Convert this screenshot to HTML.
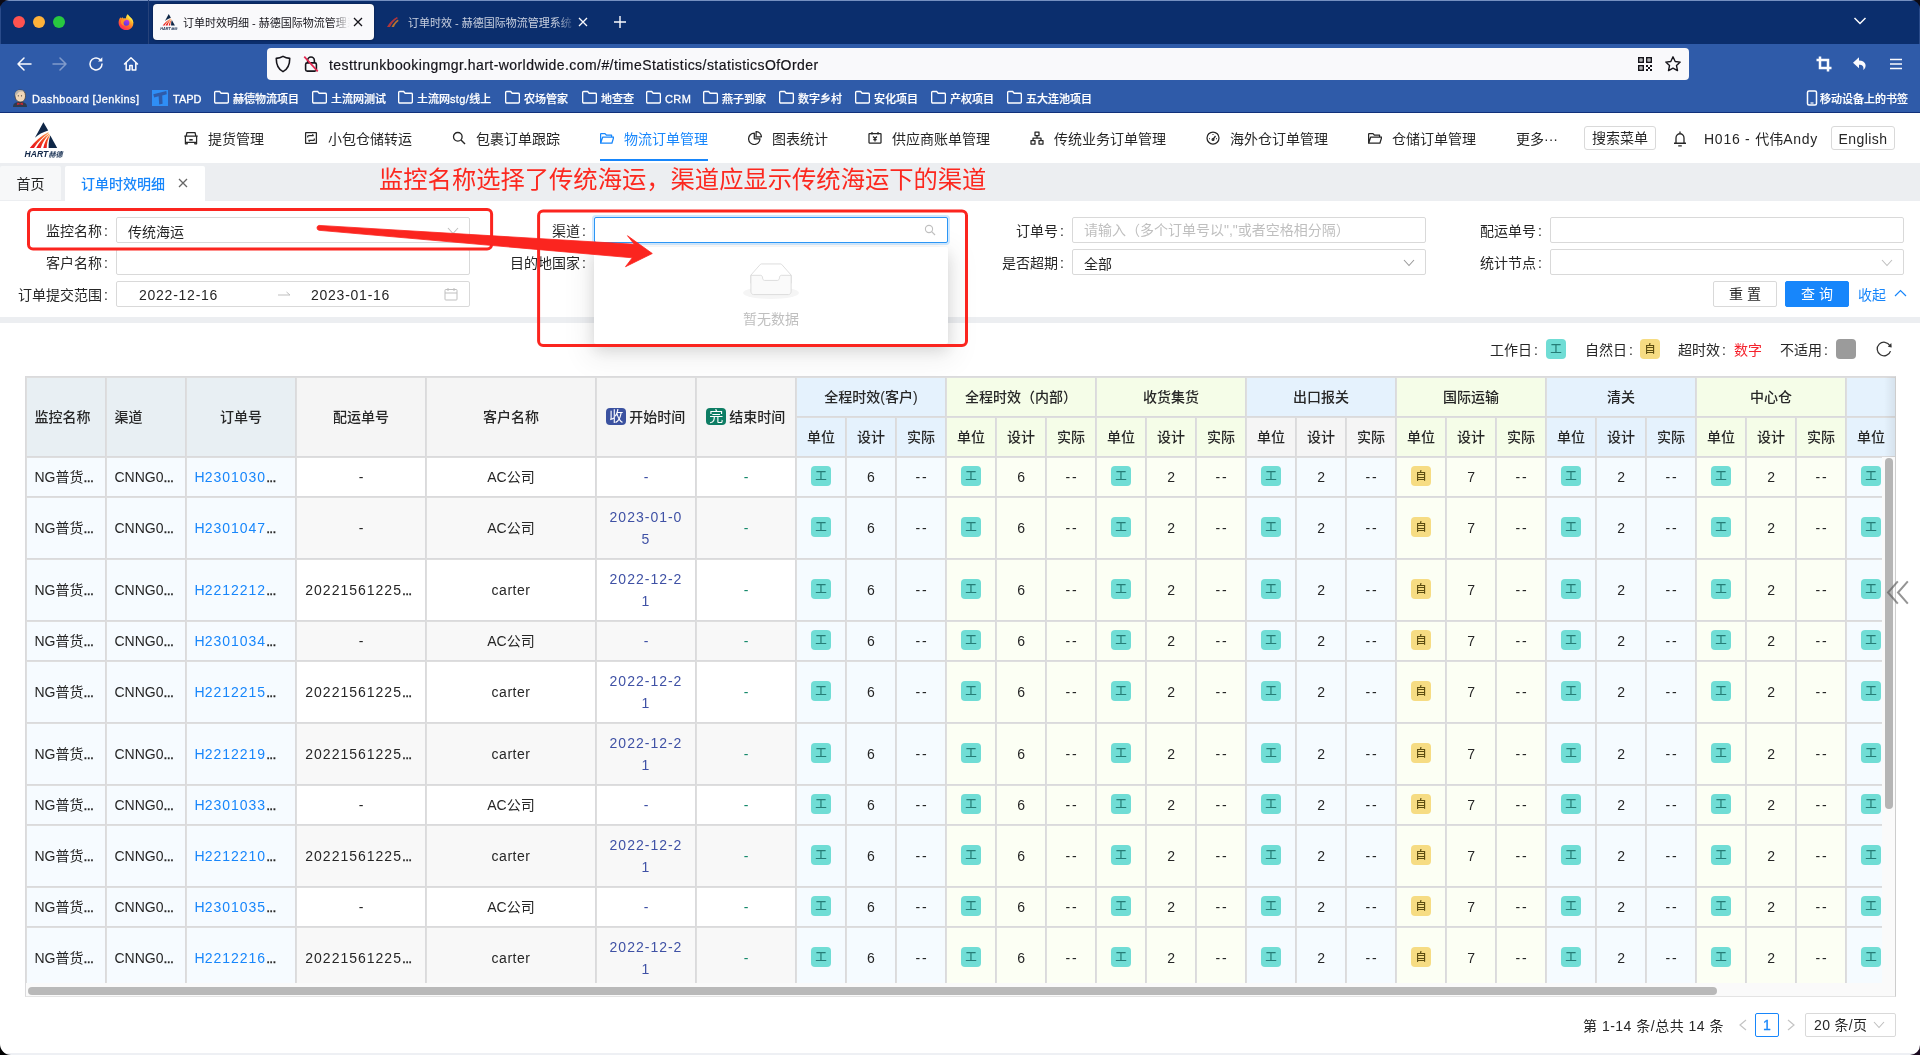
<!DOCTYPE html>
<html lang="zh-CN">
<head>
<meta charset="utf-8">
<title>订单时效明细 - 赫德国际物流管理系统</title>
<style>

*{box-sizing:border-box}
html,body{margin:0;padding:0}
body{width:1920px;height:1055px;overflow:hidden;position:relative;background:#fff;
 font-family:"Liberation Sans","Noto Sans CJK SC",sans-serif;font-size:14px;color:#262626;-webkit-font-smoothing:antialiased}
#root{position:absolute;left:0;top:0;width:1920px;height:1055px;will-change:transform}
.abs{position:absolute}
svg{display:block}
/* ---------- browser chrome ---------- */
#tabbar{position:absolute;left:0;top:0;width:1920px;height:44px;background:#0b2e6d}
#toolbar{position:absolute;left:0;top:44px;width:1920px;height:68px;background:#2f5ba9}
#chromeline{position:absolute;left:0;top:112px;width:1920px;height:1px;background:#10307a}
.tl{position:absolute;top:16px;width:12px;height:12px;border-radius:50%}
.tab1{position:absolute;left:153px;top:4px;width:221px;height:36px;background:#f9f9fb;border-radius:4px;box-shadow:0 0 2px rgba(0,0,0,.5)}
.tabtxt{position:absolute;top:16px;font-size:11px;line-height:14px;white-space:nowrap;overflow:hidden}
#urlbar{position:absolute;left:267px;top:48px;width:1422px;height:32px;background:#f9f9fb;border-radius:4px}
#urltxt{position:absolute;left:329px;top:56px;font-size:14px;line-height:18px;color:#15141a;white-space:nowrap}
.bm{position:absolute;top:92px;font-size:11px;line-height:15px;color:#fff;white-space:nowrap;font-weight:500}
.bm{-webkit-text-stroke:.2px #fff}
.bm .e{letter-spacing:.37px;-webkit-text-stroke:.3px #fff}
.bmi{position:absolute;top:91px}
/* ---------- app header ---------- */
#apphead{position:absolute;left:0;top:113px;width:1920px;height:50px;background:#fff}
.mi{position:absolute;top:129px;font-size:14px;line-height:20px;white-space:nowrap;color:#262626}
.mic{position:absolute;top:131px;width:14px;height:14px}
#pagetabs{position:absolute;left:0;top:163px;width:1920px;height:38px;background:#eceef1}
.btn{position:absolute;border:1px solid #d9d9d9;border-radius:2px;background:#fff;text-align:center;white-space:nowrap}
/* ---------- form ---------- */
.lbl{position:absolute;font-size:14px;line-height:26px;height:26px;text-align:right;white-space:nowrap;color:#262626}
.inp{position:absolute;width:354px;height:26px;border:1px solid #d9d9d9;border-radius:2px;background:#fff;font-size:14px;line-height:24px;padding-top:1.500px;white-space:nowrap;overflow:hidden}
/* ---------- table ---------- */
#tbl{position:absolute;left:25px;top:376px;width:1871px;height:620px;overflow:hidden;background:#f5f5f5;border:1px solid #dedede}
#tbl table{border-collapse:collapse;table-layout:fixed;width:1920px}
#tbl td,#tbl th{border:1px solid #dedede;padding:0;font-size:14px;font-weight:400;text-align:center;overflow:hidden;white-space:nowrap;color:#262626}
#tbl th{font-weight:500;color:#262626}
.bg{display:inline-block;width:20px;height:20px;border-radius:4px;font-size:11.500px;line-height:20px;text-align:center;vertical-align:middle;font-weight:500}
.bg.g{background:#70ddd5;color:#267d77}
.bg.z{background:#f6dc83;color:#5c4d10}
.ls{letter-spacing:.75px}


#tbl{position:absolute;left:25px;top:376px;width:1871px;height:621px;overflow:hidden;background:#f5f5f5;border-left:1px solid #dadadc;border-top:1px solid #dadadc;border-right:1px solid #cdcdcd;border-bottom:1px solid #e4e4e4}
#tbl table{border-collapse:separate;border-spacing:0;table-layout:fixed;width:1970px}
#tbl td,#tbl th{border-right:1px solid #dadadc;border-bottom:1px solid #dadadc;padding:0;font-size:14px;font-weight:400;text-align:center;overflow:hidden;white-space:nowrap;color:#262626;line-height:22px}
#tbl th{font-weight:500}
#tbl .l{text-align:left;padding-left:7.500px}
.d{letter-spacing:1px}
.e3{letter-spacing:-.7px;-webkit-text-stroke:.35px #262626}
.lc{letter-spacing:.5px}
.dd{letter-spacing:1.800px;margin-left:1.800px}
#tbl .bg{position:relative;top:-2px}
#tbl .fx{background:#f6fbff}
#tbl .bl{background:#f5fbff}
#tbl .gr{background:#fcfff4}
#tbl tr.a td.n{background:#fff}
#tbl tr.b td.n{background:#f8f8f8}
#tbl a{color:#1786fb;text-decoration:none}
#tbl .st{color:#3f51a5}
#tbl .en{color:#16896b}
.hb{display:inline-block;width:20px;height:17px;border-radius:4px;color:#fff;font-size:14px;line-height:17px;text-align:center;vertical-align:middle;margin-right:2.500px;font-weight:400;position:relative;top:-2px;left:-.5px}

</style>
</head>
<body>
<div id="root">

<div id="tabbar"></div>
<div id="toolbar"></div>
<div id="chromeline"></div>
<div class="abs" style="left:0;top:0;width:1920px;height:1px;background:#7690c0"></div>
<div class="abs" style="left:0;top:0;width:1px;height:44px;background:#2a4b8a"></div>
<div class="abs" style="left:1919px;top:0;width:1px;height:44px;background:#2a4b8a"></div>
<svg class="abs" style="left:0;top:0" width="9" height="9" viewBox="0 0 9 9"><path d="M0 0h9A9 9 0 0 0 0 9z" fill="#0c0a14"/></svg>
<svg class="abs" style="left:1911px;top:0" width="9" height="9" viewBox="0 0 9 9"><path d="M9 0H0A9 9 0 0 1 9 9z" fill="#0c0a14"/></svg>
<div class="tl" style="left:13px;background:#ff5350"></div>
<div class="tl" style="left:33px;background:#feb23a"></div>
<div class="tl" style="left:53px;background:#28c840"></div>
<svg class="abs" style="left:118px;top:14px" width="16" height="16" viewBox="0 0 16 16">
 <defs><linearGradient id="ffa" x1=".85" y1=".08" x2=".3" y2=".95"><stop offset="0" stop-color="#fff44f"/><stop offset=".35" stop-color="#ffb52a"/><stop offset=".65" stop-color="#ff6a2a"/><stop offset="1" stop-color="#ff2a5a"/></linearGradient>
 <linearGradient id="ffb" x1=".7" y1="0" x2=".3" y2="1"><stop offset="0" stop-color="#c432e6"/><stop offset="1" stop-color="#4a3ee6"/></linearGradient></defs>
 <path d="M9.800 .3C10.600 2 12.300 3 13.600 4.600C15 6.300 15.600 8.300 15.200 10.400C14.600 13.600 11.800 16 8.200 16C4 16 .6 12.800 .6 8.700C.6 6.500 1.300 4.600 2.400 3.200C2.600 3.900 2.900 4.300 3.300 4.600C3.500 4 3.900 3.500 4.500 3.200C4.700 3.800 5.200 4.300 5.800 4.500C6.600 4.200 7.400 4.200 8 4.400C7.900 3 8.500 1.300 9.800 .3Z" fill="url(#ffa)"/>
 <circle cx="8.400" cy="8.700" r="3" fill="url(#ffb)"/>
 <path d="M3.300 6.100C4.500 5.500 6.200 5.700 7.800 6.800C6.600 6.900 5.700 7.500 5.400 8.400C5.100 9.600 5.700 10.800 6.900 11.400C5 11.700 3.300 10.400 3 8.500C2.900 7.600 3 6.700 3.300 6.100Z" fill="#ff9422"/>
 <path d="M9.800 .3C10.600 2 12.300 3 13.600 4.600C14.800 6.100 15.400 7.800 15.300 9.600C14.700 7.600 13.400 6.300 11.900 5.500C10.700 4.900 9.700 3.500 9.800 .3Z" fill="#ffe84a" opacity=".75"/>
</svg>
<div class="abs" style="left:148px;top:0;width:1px;height:44px;background:#26427a"></div>
<div class="tab1"></div>
<svg class="abs" style="left:160px;top:13px" width="18" height="17" viewBox="24 120 40 38">
<defs><linearGradient id="lg160" x1="0" y1="1" x2="1" y2="0"><stop offset="0" stop-color="#e60f1e"/><stop offset=".6" stop-color="#f4501f"/><stop offset="1" stop-color="#f9b36a"/></linearGradient></defs>
<path d="M43.400 122.300 L48.200 130.600 C42.500 132.300 38.500 134.800 34.900 137.800 Z" fill="#0f2747"/>
<path d="M50.300 135.500 L57.200 147.900 L48.600 147.900 C48.500 143 49 139 50.300 135.500 Z" fill="#0f2747"/>
<path d="M29.800 147.900 C35 141.500 41 136 48.300 132.300 L48.900 133.100 C42.500 137.200 38 141.800 34 147.900 Z" fill="url(#lg160)"/>
<path d="M36.200 147.900 C39.500 142 43.500 137.200 49.100 133.400 L49.600 134.200 C45.200 138.200 42.600 142.300 40.700 147.900 Z" fill="url(#lg160)"/>
<path d="M43.300 147.900 C44.500 142.800 46.300 138.500 49.800 134.500 L50.200 135.200 C47.800 139.300 46.900 143 46.700 147.900 Z" fill="url(#lg160)"/>
<text x="24.600" y="157.300" font-size="8.300" font-weight="700" font-style="italic" fill="#14294a" font-family="Liberation Sans, Noto Sans CJK SC, sans-serif" textLength="23.600" lengthAdjust="spacingAndGlyphs">HART</text><text x="48.400" y="157" font-size="7" font-weight="700" font-style="italic" fill="#1d3557" font-family="Liberation Sans, Noto Sans CJK SC, sans-serif">赫德</text>
</svg>
<div class="tabtxt" style="left:183px;width:167px;color:#15141a">订单时效明细 - 赫德国际物流管理系统</div>
<div class="abs" style="left:330px;top:8px;width:20px;height:28px;background:linear-gradient(90deg,rgba(249,249,251,0),#f9f9fb)"></div>
<svg class="abs" style="left:352px;top:16px" width="12" height="12" viewBox="0 0 12 12"><path d="M2 2l8 8M10 2l-8 8" stroke="#15141a" stroke-width="1.300" fill="none"/></svg>
<svg class="abs" style="left:386px;top:15px;opacity:.75" width="13" height="13" viewBox="0 0 13 13"><path d="M1 12C4 7 7 4 11 2l.8 1.300C8 5.500 6 8 4 12z" fill="#e8392b"/><path d="M5.500 12c1.500-3 3.500-5.500 6.500-7.500l.5 1.500c-2.500 2-3.500 3.500-4.500 6z" fill="#f08a1c"/></svg>
<div class="tabtxt" style="left:408px;width:167px;color:rgba(251,251,254,.78)">订单时效 - 赫德国际物流管理系统</div>
<div class="abs" style="left:556px;top:8px;width:20px;height:28px;background:linear-gradient(90deg,rgba(11,46,109,0),#0b2e6d)"></div>
<svg class="abs" style="left:577px;top:16px" width="12" height="12" viewBox="0 0 12 12"><path d="M2 2l8 8M10 2l-8 8" stroke="#fbfbfe" stroke-width="1.300" fill="none"/></svg>
<svg class="abs" style="left:613px;top:15px" width="14" height="14" viewBox="0 0 14 14"><path d="M7 1v12M1 7h12" stroke="#fbfbfe" stroke-width="1.400" fill="none"/></svg>
<svg class="abs" style="left:1853px;top:16px" width="14" height="10" viewBox="0 0 14 10"><path d="M1.500 2l5.500 5.500L12.500 2" stroke="#fbfbfe" stroke-width="1.500" fill="none"/></svg>

<!-- nav buttons -->
<svg class="abs" style="left:16px;top:56px" width="16" height="16" viewBox="0 0 16 16"><path d="M15 8H2M8 2L2 8l6 6" stroke="#fbfbfe" stroke-width="1.500" fill="none" stroke-linecap="round" stroke-linejoin="round"/></svg>
<svg class="abs" style="left:52px;top:56px;opacity:.4" width="16" height="16" viewBox="0 0 16 16"><path d="M1 8h13M8 2l6 6-6 6" stroke="#fbfbfe" stroke-width="1.500" fill="none" stroke-linecap="round" stroke-linejoin="round"/></svg>
<svg class="abs" style="left:88px;top:56px" width="16" height="16" viewBox="0 0 16 16"><path d="M14 8a6 6 0 1 1-2.200-4.650" stroke="#fbfbfe" stroke-width="1.500" fill="none" stroke-linecap="round"/><path d="M14.300 1.200v4.300H10z" fill="#fbfbfe"/></svg>
<svg class="abs" style="left:123px;top:56px" width="16" height="16" viewBox="0 0 16 16"><path d="M1.500 8L8 1.800 14.500 8M3.200 6.800V14h3.600V9.500h2.400V14h3.600V6.800" stroke="#fbfbfe" stroke-width="1.500" fill="none" stroke-linecap="round" stroke-linejoin="round"/></svg>

<div id="urlbar"></div>
<svg class="abs" style="left:274px;top:55px" width="18" height="18" viewBox="0 0 16 16"><path d="M8 1.200c2 1.200 4 1.700 6 1.800 0 5.500-1.800 9.500-6 11.800C3.800 12.500 2 8.500 2 3c2-.1 4-.6 6-1.800z" stroke="#15141a" stroke-width="1.400" fill="none" stroke-linejoin="round"/></svg>
<svg class="abs" style="left:302px;top:55px" width="18" height="18" viewBox="0 0 16 16"><path d="M5 7V4.800a3 3 0 0 1 6 0V7" stroke="#15141a" stroke-width="1.400" fill="none"/><rect x="3.200" y="7" width="9.600" height="7.300" rx="1.500" stroke="#15141a" stroke-width="1.400" fill="none"/><path d="M2 1.500l12 13" stroke="#e22850" stroke-width="1.500"/></svg>
<div id="urltxt" style="letter-spacing:.44px;-webkit-text-stroke:.2px #15141a">testtrunkbookingmgr.hart-worldwide.com/#/timeStatistics/statisticsOfOrder</div>
<svg class="abs" style="left:1638px;top:57px" width="14" height="14" viewBox="0 0 14 14" fill="#15141a" fill-rule="evenodd"><path d="M0 0h6v6H0zM1.500 1.500v3h3v-3zM8 0h6v6H8zM9.500 1.500v3h3v-3zM0 8h6v6H0zM1.500 9.500v3h3v-3zM2.400 2.400h1.200v1.200H2.400zM10.400 2.400h1.200v1.200h-1.200zM2.400 10.400h1.200v1.200H2.400zM8 8h2v2H8zM10 10h2v2h-2zM12 8h2v2h-2zM8 12h2v2H8zM12 12h2v2h-2z"/></svg>
<svg class="abs" style="left:1664px;top:55px" width="18" height="18" viewBox="0 0 18 18"><path d="M9 1.800l2.200 4.700 5 .6-3.700 3.500 1 5L9 13.100l-4.500 2.500 1-5L1.800 7.100l5-.6z" stroke="#15141a" stroke-width="1.400" fill="none" stroke-linejoin="round"/></svg>

<svg class="abs" style="left:1816px;top:56px" width="16" height="16" viewBox="0 0 16 16"><path d="M4 0.500v11.500h11.500M0.500 4h11.500v11.500" stroke="#fbfbfe" stroke-width="2.500" fill="none"/></svg>
<svg class="abs" style="left:1852px;top:56px" width="16" height="16" viewBox="0 0 16 16"><path d="M7 1.200L1 6.700l6 5.500V8.800c3.200 0 5 1.300 4.300 5.200C15.500 11 14 4.600 7 4.600z" fill="#fbfbfe"/></svg>
<svg class="abs" style="left:1889px;top:58px" width="14" height="12" viewBox="0 0 14 12"><path d="M1 1.500h12M1 6h12M1 10.500h12" stroke="#fbfbfe" stroke-width="1.400" fill="none"/></svg>

<!-- bookmarks -->
<svg class="bmi" style="left:12px;top:89px" width="16" height="18" viewBox="0 0 16 18"><path d="M1 18c0-3.500 2-5 7-5s7 1.500 7 5z" fill="#2e3b4e"/><path d="M3 6.500C3 3 5 1 8.300 1S13.500 3 13.500 6.800c0 3.700-2 6.200-5.200 6.200S3 10.200 3 6.500z" fill="#f0d6b7" stroke="#4a4036" stroke-width=".8"/><path d="M3 7C2.500 3.500 4.500 1 8 1c2 0 3.500.8 4.500 2-2.500-.8-5-.5-6.500 1-.8 1-1.500 2-3 3z" fill="#b9b3ab"/><path d="M5.500 13.500l2.500 1.200 2.500-1.200.6 2.600-3.100-.9-3.100.9z" fill="#e0262b"/><circle cx="9.500" cy="6.800" r=".6" fill="#333"/><circle cx="6.300" cy="6.800" r=".6" fill="#333"/></svg>
<div class="bm" style="left:32px"><span class="e">Dashboard [Jenkins]</span></div>
<svg class="bmi" style="left:152px;top:90px" width="16" height="16" viewBox="0 0 16 16"><rect width="16" height="16" fill="#2f8ef5"/><path d="M1.300 4.300L14.300 1.100L14.800 4.300L10.200 5.400L10.600 13.800L7.200 14.600L6.600 6.300L2.200 7.600Z" fill="#2f5ba9"/></svg>
<div class="bm" style="left:173px"><span style="-webkit-text-stroke:.3px #fff">TAPD</span></div>
<svg class="bmi" style="left:213.7px;top:89.800px" width="15.600" height="14.800" viewBox="0 0 14 12" preserveAspectRatio="none"><path d="M1.5 1.2h3.6l1.3 1.5h5.6a.9.9 0 0 1 .9.9v6a.9.9 0 0 1-.9.9H1.5a.9.9 0 0 1-.9-.9V2.100a.9.9 0 0 1 .9-.9z" fill="none" stroke="#fff" stroke-width="1.2"/></svg><div class="bm" style="left:233px">赫德物流项目</div>
<svg class="bmi" style="left:311.7px;top:89.800px" width="15.600" height="14.800" viewBox="0 0 14 12" preserveAspectRatio="none"><path d="M1.5 1.2h3.6l1.3 1.5h5.6a.9.9 0 0 1 .9.9v6a.9.9 0 0 1-.9.9H1.5a.9.9 0 0 1-.9-.9V2.100a.9.9 0 0 1 .9-.9z" fill="none" stroke="#fff" stroke-width="1.2"/></svg><div class="bm" style="left:331px">土流网测试</div>
<svg class="bmi" style="left:397.7px;top:89.800px" width="15.600" height="14.800" viewBox="0 0 14 12" preserveAspectRatio="none"><path d="M1.5 1.2h3.6l1.3 1.5h5.6a.9.9 0 0 1 .9.9v6a.9.9 0 0 1-.9.9H1.5a.9.9 0 0 1-.9-.9V2.100a.9.9 0 0 1 .9-.9z" fill="none" stroke="#fff" stroke-width="1.2"/></svg><div class="bm" style="left:417px">土流网<span class="e">stg/</span>线上</div>
<svg class="bmi" style="left:504.7px;top:89.800px" width="15.600" height="14.800" viewBox="0 0 14 12" preserveAspectRatio="none"><path d="M1.5 1.2h3.6l1.3 1.5h5.6a.9.9 0 0 1 .9.9v6a.9.9 0 0 1-.9.9H1.5a.9.9 0 0 1-.9-.9V2.100a.9.9 0 0 1 .9-.9z" fill="none" stroke="#fff" stroke-width="1.2"/></svg><div class="bm" style="left:524px">农场管家</div>
<svg class="bmi" style="left:581.7px;top:89.800px" width="15.600" height="14.800" viewBox="0 0 14 12" preserveAspectRatio="none"><path d="M1.5 1.2h3.6l1.3 1.5h5.6a.9.9 0 0 1 .9.9v6a.9.9 0 0 1-.9.9H1.5a.9.9 0 0 1-.9-.9V2.100a.9.9 0 0 1 .9-.9z" fill="none" stroke="#fff" stroke-width="1.2"/></svg><div class="bm" style="left:601px">地查查</div>
<svg class="bmi" style="left:645.7px;top:89.800px" width="15.600" height="14.800" viewBox="0 0 14 12" preserveAspectRatio="none"><path d="M1.5 1.2h3.6l1.3 1.5h5.6a.9.9 0 0 1 .9.9v6a.9.9 0 0 1-.9.9H1.5a.9.9 0 0 1-.9-.9V2.100a.9.9 0 0 1 .9-.9z" fill="none" stroke="#fff" stroke-width="1.2"/></svg><div class="bm" style="left:665px"><span class="e">CRM</span></div>
<svg class="bmi" style="left:702.7px;top:89.800px" width="15.600" height="14.800" viewBox="0 0 14 12" preserveAspectRatio="none"><path d="M1.5 1.2h3.6l1.3 1.5h5.6a.9.9 0 0 1 .9.9v6a.9.9 0 0 1-.9.9H1.5a.9.9 0 0 1-.9-.9V2.100a.9.9 0 0 1 .9-.9z" fill="none" stroke="#fff" stroke-width="1.2"/></svg><div class="bm" style="left:722px">燕子到家</div>
<svg class="bmi" style="left:778.7px;top:89.800px" width="15.600" height="14.800" viewBox="0 0 14 12" preserveAspectRatio="none"><path d="M1.5 1.2h3.6l1.3 1.5h5.6a.9.9 0 0 1 .9.9v6a.9.9 0 0 1-.9.9H1.5a.9.9 0 0 1-.9-.9V2.100a.9.9 0 0 1 .9-.9z" fill="none" stroke="#fff" stroke-width="1.2"/></svg><div class="bm" style="left:798px">数字乡村</div>
<svg class="bmi" style="left:854.7px;top:89.800px" width="15.600" height="14.800" viewBox="0 0 14 12" preserveAspectRatio="none"><path d="M1.5 1.2h3.6l1.3 1.5h5.6a.9.9 0 0 1 .9.9v6a.9.9 0 0 1-.9.9H1.5a.9.9 0 0 1-.9-.9V2.100a.9.9 0 0 1 .9-.9z" fill="none" stroke="#fff" stroke-width="1.2"/></svg><div class="bm" style="left:874px">安化项目</div>
<svg class="bmi" style="left:930.7px;top:89.800px" width="15.600" height="14.800" viewBox="0 0 14 12" preserveAspectRatio="none"><path d="M1.5 1.2h3.6l1.3 1.5h5.6a.9.9 0 0 1 .9.9v6a.9.9 0 0 1-.9.9H1.5a.9.9 0 0 1-.9-.9V2.100a.9.9 0 0 1 .9-.9z" fill="none" stroke="#fff" stroke-width="1.2"/></svg><div class="bm" style="left:950px">产权项目</div>
<svg class="bmi" style="left:1006.7px;top:89.800px" width="15.600" height="14.800" viewBox="0 0 14 12" preserveAspectRatio="none"><path d="M1.5 1.2h3.6l1.3 1.5h5.6a.9.9 0 0 1 .9.9v6a.9.9 0 0 1-.9.9H1.5a.9.9 0 0 1-.9-.9V2.100a.9.9 0 0 1 .9-.9z" fill="none" stroke="#fff" stroke-width="1.2"/></svg><div class="bm" style="left:1026px">五大连池项目</div>

<svg class="bmi" style="left:1806px;top:90px" width="12" height="16" viewBox="0 0 11 16"><rect x="1" y="1" width="9" height="14" rx="1.500" stroke="#fff" stroke-width="1.500" fill="none"/><path d="M4 13h3" stroke="#fff" stroke-width="1.200"/></svg>
<div class="bm" style="left:1820px">移动设备上的书签</div>


<div id="apphead"></div>
<svg class="abs" style="left:24px;top:120px" width="40" height="38" viewBox="24 120 40 38">
<defs><linearGradient id="lg24" x1="0" y1="1" x2="1" y2="0"><stop offset="0" stop-color="#e60f1e"/><stop offset=".6" stop-color="#f4501f"/><stop offset="1" stop-color="#f9b36a"/></linearGradient></defs>
<path d="M43.400 122.300 L48.200 130.600 C42.500 132.300 38.500 134.800 34.900 137.800 Z" fill="#0f2747"/>
<path d="M50.300 135.500 L57.200 147.900 L48.600 147.900 C48.500 143 49 139 50.300 135.500 Z" fill="#0f2747"/>
<path d="M29.800 147.900 C35 141.500 41 136 48.300 132.300 L48.900 133.100 C42.500 137.200 38 141.800 34 147.900 Z" fill="url(#lg24)"/>
<path d="M36.200 147.900 C39.500 142 43.500 137.200 49.100 133.400 L49.600 134.200 C45.200 138.200 42.600 142.300 40.700 147.900 Z" fill="url(#lg24)"/>
<path d="M43.300 147.900 C44.500 142.800 46.300 138.500 49.800 134.500 L50.200 135.200 C47.800 139.300 46.900 143 46.700 147.900 Z" fill="url(#lg24)"/>
<text x="24.600" y="157.300" font-size="8.300" font-weight="700" font-style="italic" fill="#14294a" font-family="Liberation Sans, Noto Sans CJK SC, sans-serif" textLength="23.600" lengthAdjust="spacingAndGlyphs">HART</text><text x="48.400" y="157" font-size="7" font-weight="700" font-style="italic" fill="#1d3557" font-family="Liberation Sans, Noto Sans CJK SC, sans-serif">赫德</text>
</svg>
<svg class="abs" style="left:184px;top:131px" width="14" height="14" viewBox="0 0 14 14" fill="none" stroke="#262626" stroke-width="1.250" stroke-linejoin="round"><path d="M2.100 5.200L3 1.500H11L11.900 5.200M1.400 5.200H12.600V11.400H1.400ZM1.400 11.400V12.800H3.200V11.400M10.800 11.400V12.800H12.600V11.400M.3 5H1.500M12.500 5H13.700"/><path d="M5.300 8.800H8.700" stroke-width="1.600"/></svg><div class="mi" style="left:208px;color:#262626">提货管理</div>
<svg class="abs" style="left:304px;top:131px" width="14" height="14" viewBox="0 0 14 14" fill="none" stroke="#262626" stroke-width="1.250" stroke-linejoin="round"><rect x="1.600" y="1.600" width="10.800" height="10.800" rx=".4"/><path d="M3.700 6.400V5.600a1 1 0 0 1 1-1H9.600M8.300 3.400L9.700 4.600M10.300 7.600V8.400a1 1 0 0 1-1 1H4.400M5.700 10.600L4.300 9.400"/></svg><div class="mi" style="left:328px;color:#262626">小包仓储转运</div>
<svg class="abs" style="left:452px;top:131px" width="14" height="14" viewBox="0 0 14 14" fill="none" stroke="#262626" stroke-width="1.250" stroke-linejoin="round"><circle cx="5.800" cy="5.800" r="4.300" stroke-width="1.300"/><path d="M9 9l4 4" stroke-width="1.400"/></svg><div class="mi" style="left:476px;color:#262626">包裹订单跟踪</div>
<svg class="abs" style="left:600px;top:131px" width="14" height="14" viewBox="0 0 14 14" fill="none" stroke="#1786fb" stroke-width="1.250" stroke-linejoin="round"><path d="M.6 2.600H5L6.500 4.200H11.600V6.200M.6 2.600V12.200H11.900L13.700 6.200H2.600L.7 12"/></svg><div class="mi" style="left:624px;color:#1786fb">物流订单管理</div>
<svg class="abs" style="left:748px;top:131px" width="14" height="14" viewBox="0 0 14 14" fill="none" stroke="#262626" stroke-width="1.250" stroke-linejoin="round"><path d="M6.300 2.100A5.700 5.700 0 1 0 12 7.800H6.300z"/><path d="M8.100 .6a5.300 5.300 0 0 1 5.300 5.300H8.100z"/></svg><div class="mi" style="left:772px;color:#262626">图表统计</div>
<svg class="abs" style="left:868px;top:131px" width="14" height="14" viewBox="0 0 14 14" fill="none" stroke="#262626" stroke-width="1.250" stroke-linejoin="round"><rect x="1" y="2.500" width="12" height="9.500" rx=".5"/><path d="M4 1v2.500M10 1v2.500M5 5.500l2 2 2-2M7 7.500v3M5.300 8.500h3.400"/></svg><div class="mi" style="left:892px;color:#262626">供应商账单管理</div>
<svg class="abs" style="left:1030px;top:131px" width="14" height="14" viewBox="0 0 14 14" fill="none" stroke="#262626" stroke-width="1.250" stroke-linejoin="round"><rect x="5" y="1" width="4" height="3.500"/><rect x="1" y="9.500" width="4" height="3.500"/><rect x="9" y="9.500" width="4" height="3.500"/><path d="M7 4.500v2.500M3 9.500V7h8v2.500"/></svg><div class="mi" style="left:1054px;color:#262626">传统业务订单管理</div>
<svg class="abs" style="left:1206px;top:131px" width="14" height="14" viewBox="0 0 14 14" fill="none" stroke="#262626" stroke-width="1.250" stroke-linejoin="round"><circle cx="7" cy="7" r="6"/><path d="M7 8.300L9.500 5"/><circle cx="7" cy="8.500" r=".9"/><path d="M3 7.500h.8M10.200 7.500h.8M7 3.200v.8"/></svg><div class="mi" style="left:1230px;color:#262626">海外仓订单管理</div>
<svg class="abs" style="left:1368px;top:131px" width="14" height="14" viewBox="0 0 14 14" fill="none" stroke="#262626" stroke-width="1.250" stroke-linejoin="round"><path d="M.6 2.600H5L6.500 4.200H11.600V6.200M.6 2.600V12.200H11.900L13.700 6.200H2.600L.7 12"/></svg><div class="mi" style="left:1392px;color:#262626">仓储订单管理</div>

<div class="abs" style="left:600px;top:159px;width:108px;height:2px;background:#1786fb"></div>
<div class="mi" style="left:1516px">更多···</div>
<div class="btn" style="left:1584px;top:126px;width:72px;height:24px;line-height:23px;font-size:14px;border-radius:3px">搜索菜单</div>
<svg class="abs" style="left:1672px;top:129.500px" width="16" height="18" viewBox="0 0 16 17" preserveAspectRatio="none" fill="none" stroke="#262626" stroke-width="1.300" stroke-linejoin="round"><path d="M4 12.500V7.500a4 4 0 0 1 8 0v5M2 12.500h12M6.200 15h3.600M8 1.500v2"/></svg>
<div class="mi" style="left:1704px"><span class="ls">H016 - </span>代伟<span class="ls">Andy</span></div>
<div class="btn" style="left:1831px;top:126px;width:64px;height:24px;line-height:24px;font-size:14px;border-radius:3px"><span style="letter-spacing:.45px">English</span></div>

<div id="pagetabs"></div>
<div class="abs" style="left:0;top:166px;width:61px;height:34px;background:#f7f8f9;border-radius:2px 2px 0 0;text-align:center;line-height:36px;font-size:14px">首页</div>
<div class="abs" style="left:65px;top:166px;width:140px;height:35px;background:#fff;border-radius:2px 2px 0 0"></div>
<div class="abs" style="left:81px;top:174px;line-height:20px;font-size:14px;color:#1786fb;font-weight:500;white-space:nowrap">订单时效明细</div>
<svg class="abs" style="left:178px;top:178px" width="10" height="10" viewBox="0 0 10 10"><path d="M1 1l8 8M9 1l-8 8" stroke="#666" stroke-width="1.300" fill="none"/></svg>
<div class="abs" style="left:379px;top:163px;font-size:24.300px;line-height:34px;color:#fc281f;white-space:nowrap">监控名称选择了传统海运，渠道应显示传统海运下的渠道</div>

<div class="lbl" style="left:-51px;width:160px;top:218px">监控名称<span style="margin-left:2px;margin-right:1px">:</span></div>
<div class="lbl" style="left:-51px;width:160px;top:250px">客户名称<span style="margin-left:2px;margin-right:1px">:</span></div>
<div class="lbl" style="left:-51px;width:160px;top:282px">订单提交范围<span style="margin-left:2px;margin-right:1px">:</span></div>
<div class="lbl" style="left:427px;width:160px;top:218px">渠道<span style="margin-left:2px;margin-right:1px">:</span></div>
<div class="lbl" style="left:427px;width:160px;top:250px">目的地国家<span style="margin-left:2px;margin-right:1px">:</span></div>
<div class="lbl" style="left:905px;width:160px;top:218px">订单号<span style="margin-left:2px;margin-right:1px">:</span></div>
<div class="lbl" style="left:905px;width:160px;top:250px">是否超期<span style="margin-left:2px;margin-right:1px">:</span></div>
<div class="lbl" style="left:1383px;width:160px;top:218px">配运单号<span style="margin-left:2px;margin-right:1px">:</span></div>
<div class="lbl" style="left:1383px;width:160px;top:250px">统计节点<span style="margin-left:2px;margin-right:1px">:</span></div>
<div class="inp" style="left:116px;top:217px;"><span style="margin-left:11px">传统海运</span></div>
<svg class="abs" style="left:447px;top:227px" width="12" height="8" viewBox="0 0 12 8"><path d="M1 1l5 5.500L11 1" stroke="#bfbfbf" stroke-width="1.100" fill="none"/></svg><div class="inp" style="left:116px;top:249px;"></div>
<div class="inp" style="left:116px;top:281px;"><span class="ls" style="position:absolute;left:22px;top:.5px">2022-12-16</span><span class="ls" style="position:absolute;left:194px;top:.5px">2023-01-16</span></div>
<svg class="abs" style="left:277px;top:289px" width="14" height="10" viewBox="0 0 14 10"><path d="M1 6h12L9.500 3" stroke="#bfbfbf" stroke-width="1" fill="none"/></svg><svg class="abs" style="left:444px;top:287px" width="14" height="14" viewBox="0 0 14 14"><rect x="1" y="2.500" width="12" height="10.500" rx=".8" stroke="#bfbfbf" stroke-width="1" fill="none"/><path d="M1 6h12M4 1v3M10 1v3" stroke="#bfbfbf" stroke-width="1" fill="none"/></svg><div class="inp" style="left:594px;top:249px;"></div>
<div class="inp" style="left:1072px;top:217px;"><span style="margin-left:11px;color:#bfbfbf;position:relative;top:-1.500px">请输入（多个订单号以","或者空格相分隔）</span></div>
<div class="inp" style="left:1072px;top:249px;"><span style="margin-left:11px">全部</span></div>
<svg class="abs" style="left:1403px;top:259px" width="12" height="8" viewBox="0 0 12 8"><path d="M1 1l5 5.500L11 1" stroke="#9a9a9a" stroke-width="1.100" fill="none"/></svg><div class="inp" style="left:1550px;top:217px;"></div>
<div class="inp" style="left:1550px;top:249px;"></div>
<svg class="abs" style="left:1881px;top:259px" width="12" height="8" viewBox="0 0 12 8"><path d="M1 1l5 5.500L11 1" stroke="#bfbfbf" stroke-width="1.100" fill="none"/></svg><div class="btn" style="left:1713px;top:281px;width:64px;height:26px;line-height:24px;font-size:14px">重 置</div><div class="btn" style="left:1785px;top:281px;width:64px;height:26px;line-height:24px;font-size:14px;background:#1786fb;border-color:#1786fb;color:#fff">查 询</div><div class="abs" style="left:1858px;top:282px;line-height:26px;font-size:14px;color:#1786fb;white-space:nowrap">收起</div><svg class="abs" style="left:1894px;top:289px" width="13" height="8" viewBox="0 0 13 8"><path d="M1 7l5.500-5.500L12 7" stroke="#1786fb" stroke-width="1.200" fill="none"/></svg><div class="abs" style="left:0;top:317px;width:1920px;height:6px;background:#eceef1"></div><div class="abs" style="left:594px;top:247px;width:354px;height:97px;background:#fff;border-radius:2px;box-shadow:0 3px 6px -4px rgba(0,0,0,.14),0 6px 16px 0 rgba(0,0,0,.13),0 9px 28px 8px rgba(0,0,0,.06)"></div>
<svg class="abs" style="left:743px;top:263px" width="56" height="36" viewBox="0 0 64 41"><g transform="translate(0 1)" fill="none" fill-rule="evenodd"><ellipse fill="#f5f5f5" cx="32" cy="33" rx="32" ry="7"/><g fill-rule="nonzero" stroke="#d9d9d9"><path d="M55 12.760L44.854 1.258C44.367.474 43.656 0 42.907 0H21.093c-.749 0-1.460.474-1.947 1.257L9 12.761V22h46v-9.240z"/><path d="M41.613 15.931c0-1.605.994-2.930 2.227-2.931H55v18.137C55 33.260 53.680 35 52.050 35h-40.100C10.320 35 9 33.259 9 31.137V13h11.160c1.233 0 2.227 1.323 2.227 2.928v.022c0 1.605 1.005 2.901 2.237 2.901h14.752c1.232 0 2.237-1.308 2.237-2.913v-.007z" fill="#fafafa"/></g></g></svg>
<div class="abs" style="left:671px;top:309px;width:200px;text-align:center;font-size:14px;line-height:20px;color:#bfbfbf">暂无数据</div>
<div class="inp" style="left:594px;top:217px;border-color:#2b96f5;box-shadow:0 0 0 2px rgba(24,144,255,.2)"></div><svg class="abs" style="left:924px;top:224px" width="12" height="12" viewBox="0 0 12 12"><circle cx="5" cy="5" r="3.600" stroke="#bfbfbf" stroke-width="1.100" fill="none"/><path d="M7.700 7.700l3.300 3.300" stroke="#bfbfbf" stroke-width="1.200"/></svg><div class="abs" style="left:1490px;top:340px;line-height:20px;font-size:14px;white-space:nowrap">工作日<span style="margin-left:2px">:</span></div><span class="bg g abs" style="left:1546px;top:339px">工</span><div class="abs" style="left:1585px;top:340px;line-height:20px;font-size:14px;white-space:nowrap">自然日<span style="margin-left:2px">:</span></div><span class="bg z abs" style="left:1640px;top:339px">自</span><div class="abs" style="left:1678px;top:340px;line-height:20px;font-size:14px;white-space:nowrap">超时效<span style="margin-left:2px">:</span></div><div class="abs" style="left:1734px;top:340px;line-height:20px;font-size:14px;color:#f5222d">数字</div><div class="abs" style="left:1780px;top:340px;line-height:20px;font-size:14px;white-space:nowrap">不适用<span style="margin-left:2px">:</span></div><span class="bg abs" style="left:1836px;top:339px;background:#9b9b9b"></span><svg class="abs" style="left:1870px;top:335px" width="28" height="28" viewBox="1870 335 28 28"><path d="M1890.500 351.100A6.800 6.800 0 1 1 1889.900 345.600" stroke="#333" stroke-width="1.300" fill="none"/><path d="M1887.800 346.800L1891.300 343.100L1891.700 347.500Z" fill="#333"/></svg>
<div id="tbl"><table><col style="width:80px"><col style="width:80px"><col style="width:110px"><col style="width:130px"><col style="width:170px"><col style="width:100px"><col style="width:100px"><col style="width:50px"><col style="width:50px"><col style="width:50px"><col style="width:50px"><col style="width:50px"><col style="width:50px"><col style="width:50px"><col style="width:50px"><col style="width:50px"><col style="width:50px"><col style="width:50px"><col style="width:50px"><col style="width:50px"><col style="width:50px"><col style="width:50px"><col style="width:50px"><col style="width:50px"><col style="width:50px"><col style="width:50px"><col style="width:50px"><col style="width:50px"><col style="width:50px"><col style="width:50px"><col style="width:50px"><thead><tr style="height:40px"><th rowspan="2" class="l" style="background:#e8eff3">监控名称</th><th rowspan="2" class="l" style="background:#e8eff3">渠道</th><th rowspan="2" style="background:#e8eff3">订单号</th><th rowspan="2" style="background:#f5f5f5">配运单号</th><th rowspan="2" style="background:#f5f5f5">客户名称</th><th rowspan="2" style="background:#f5f5f5"><span class="hb" style="background:#3b52a0">收</span>开始时间</th><th rowspan="2" style="background:#f5f5f5"><span class="hb" style="background:#0e7d64">完</span>结束时间</th><th colspan="3" style="background:#e5f2fd">全程时效(客户)</th><th colspan="3" style="background:#f5fde8">全程时效（内部）</th><th colspan="3" style="background:#f5fde8">收货集货</th><th colspan="3" style="background:#e5f2fd">出口报关</th><th colspan="3" style="background:#f5fde8">国际运输</th><th colspan="3" style="background:#e5f2fd">清关</th><th colspan="3" style="background:#f5fde8">中心仓</th><th colspan="3" style="background:#e5f2fd">派送</th></tr><tr style="height:40px"><th style="background:#e5f2fd">单位</th><th style="background:#e5f2fd">设计</th><th style="background:#e5f2fd">实际</th><th style="background:#f5fde8">单位</th><th style="background:#f5fde8">设计</th><th style="background:#f5fde8">实际</th><th style="background:#f5fde8">单位</th><th style="background:#f5fde8">设计</th><th style="background:#f5fde8">实际</th><th style="background:#f5f5f5">单位</th><th style="background:#f5f5f5">设计</th><th style="background:#f5f5f5">实际</th><th style="background:#f5fde8">单位</th><th style="background:#f5fde8">设计</th><th style="background:#f5fde8">实际</th><th style="background:#e5f2fd">单位</th><th style="background:#e5f2fd">设计</th><th style="background:#e5f2fd">实际</th><th style="background:#f5fde8">单位</th><th style="background:#f5fde8">设计</th><th style="background:#f5fde8">实际</th><th style="background:#e5f2fd">单位</th><th style="background:#e5f2fd">设计</th><th style="background:#e5f2fd">实际</th></tr></thead><tbody>
<tr class="a" style="height:40px"><td class="l fx">NG普货<span class="e3">...</span></td><td class="l fx">CNNG0<span class="e3">...</span></td><td class="l fx"><a>H<span class="d">2301030</span></a><span class="e3">...</span></td><td class="n">-</td><td class="n">AC公司</td><td class="n st">-</td><td class="n en">-</td><td class="bl"><span class="bg g">工</span></td><td class="bl">6</td><td class="bl"><span class="dd">--</span></td><td class="gr"><span class="bg g">工</span></td><td class="gr">6</td><td class="gr"><span class="dd">--</span></td><td class="gr"><span class="bg g">工</span></td><td class="gr">2</td><td class="gr"><span class="dd">--</span></td><td class="bl"><span class="bg g">工</span></td><td class="bl">2</td><td class="bl"><span class="dd">--</span></td><td class="gr"><span class="bg z">自</span></td><td class="gr">7</td><td class="gr"><span class="dd">--</span></td><td class="bl"><span class="bg g">工</span></td><td class="bl">2</td><td class="bl"><span class="dd">--</span></td><td class="gr"><span class="bg g">工</span></td><td class="gr">2</td><td class="gr"><span class="dd">--</span></td><td class="bl"><span class="bg g">工</span></td><td class="bl">2</td><td class="bl"><span class="dd">--</span></td></tr>
<tr class="b" style="height:62px"><td class="l fx">NG普货<span class="e3">...</span></td><td class="l fx">CNNG0<span class="e3">...</span></td><td class="l fx"><a>H<span class="d">2301047</span></a><span class="e3">...</span></td><td class="n">-</td><td class="n">AC公司</td><td class="n st"><span class="d">2023-01-0<br>5</span></td><td class="n en">-</td><td class="bl"><span class="bg g">工</span></td><td class="bl">6</td><td class="bl"><span class="dd">--</span></td><td class="gr"><span class="bg g">工</span></td><td class="gr">6</td><td class="gr"><span class="dd">--</span></td><td class="gr"><span class="bg g">工</span></td><td class="gr">2</td><td class="gr"><span class="dd">--</span></td><td class="bl"><span class="bg g">工</span></td><td class="bl">2</td><td class="bl"><span class="dd">--</span></td><td class="gr"><span class="bg z">自</span></td><td class="gr">7</td><td class="gr"><span class="dd">--</span></td><td class="bl"><span class="bg g">工</span></td><td class="bl">2</td><td class="bl"><span class="dd">--</span></td><td class="gr"><span class="bg g">工</span></td><td class="gr">2</td><td class="gr"><span class="dd">--</span></td><td class="bl"><span class="bg g">工</span></td><td class="bl">2</td><td class="bl"><span class="dd">--</span></td></tr>
<tr class="a" style="height:62px"><td class="l fx">NG普货<span class="e3">...</span></td><td class="l fx">CNNG0<span class="e3">...</span></td><td class="l fx"><a>H<span class="d">2212212</span></a><span class="e3">...</span></td><td class="n l" style="padding-left:8.300px"><span class="d">20221561225</span><span class="e3">...</span></td><td class="n"><span class="lc">carter</span></td><td class="n st"><span class="d">2022-12-2<br>1</span></td><td class="n en">-</td><td class="bl"><span class="bg g">工</span></td><td class="bl">6</td><td class="bl"><span class="dd">--</span></td><td class="gr"><span class="bg g">工</span></td><td class="gr">6</td><td class="gr"><span class="dd">--</span></td><td class="gr"><span class="bg g">工</span></td><td class="gr">2</td><td class="gr"><span class="dd">--</span></td><td class="bl"><span class="bg g">工</span></td><td class="bl">2</td><td class="bl"><span class="dd">--</span></td><td class="gr"><span class="bg z">自</span></td><td class="gr">7</td><td class="gr"><span class="dd">--</span></td><td class="bl"><span class="bg g">工</span></td><td class="bl">2</td><td class="bl"><span class="dd">--</span></td><td class="gr"><span class="bg g">工</span></td><td class="gr">2</td><td class="gr"><span class="dd">--</span></td><td class="bl"><span class="bg g">工</span></td><td class="bl">2</td><td class="bl"><span class="dd">--</span></td></tr>
<tr class="b" style="height:40px"><td class="l fx">NG普货<span class="e3">...</span></td><td class="l fx">CNNG0<span class="e3">...</span></td><td class="l fx"><a>H<span class="d">2301034</span></a><span class="e3">...</span></td><td class="n">-</td><td class="n">AC公司</td><td class="n st">-</td><td class="n en">-</td><td class="bl"><span class="bg g">工</span></td><td class="bl">6</td><td class="bl"><span class="dd">--</span></td><td class="gr"><span class="bg g">工</span></td><td class="gr">6</td><td class="gr"><span class="dd">--</span></td><td class="gr"><span class="bg g">工</span></td><td class="gr">2</td><td class="gr"><span class="dd">--</span></td><td class="bl"><span class="bg g">工</span></td><td class="bl">2</td><td class="bl"><span class="dd">--</span></td><td class="gr"><span class="bg z">自</span></td><td class="gr">7</td><td class="gr"><span class="dd">--</span></td><td class="bl"><span class="bg g">工</span></td><td class="bl">2</td><td class="bl"><span class="dd">--</span></td><td class="gr"><span class="bg g">工</span></td><td class="gr">2</td><td class="gr"><span class="dd">--</span></td><td class="bl"><span class="bg g">工</span></td><td class="bl">2</td><td class="bl"><span class="dd">--</span></td></tr>
<tr class="a" style="height:62px"><td class="l fx">NG普货<span class="e3">...</span></td><td class="l fx">CNNG0<span class="e3">...</span></td><td class="l fx"><a>H<span class="d">2212215</span></a><span class="e3">...</span></td><td class="n l" style="padding-left:8.300px"><span class="d">20221561225</span><span class="e3">...</span></td><td class="n"><span class="lc">carter</span></td><td class="n st"><span class="d">2022-12-2<br>1</span></td><td class="n en">-</td><td class="bl"><span class="bg g">工</span></td><td class="bl">6</td><td class="bl"><span class="dd">--</span></td><td class="gr"><span class="bg g">工</span></td><td class="gr">6</td><td class="gr"><span class="dd">--</span></td><td class="gr"><span class="bg g">工</span></td><td class="gr">2</td><td class="gr"><span class="dd">--</span></td><td class="bl"><span class="bg g">工</span></td><td class="bl">2</td><td class="bl"><span class="dd">--</span></td><td class="gr"><span class="bg z">自</span></td><td class="gr">7</td><td class="gr"><span class="dd">--</span></td><td class="bl"><span class="bg g">工</span></td><td class="bl">2</td><td class="bl"><span class="dd">--</span></td><td class="gr"><span class="bg g">工</span></td><td class="gr">2</td><td class="gr"><span class="dd">--</span></td><td class="bl"><span class="bg g">工</span></td><td class="bl">2</td><td class="bl"><span class="dd">--</span></td></tr>
<tr class="b" style="height:62px"><td class="l fx">NG普货<span class="e3">...</span></td><td class="l fx">CNNG0<span class="e3">...</span></td><td class="l fx"><a>H<span class="d">2212219</span></a><span class="e3">...</span></td><td class="n l" style="padding-left:8.300px"><span class="d">20221561225</span><span class="e3">...</span></td><td class="n"><span class="lc">carter</span></td><td class="n st"><span class="d">2022-12-2<br>1</span></td><td class="n en">-</td><td class="bl"><span class="bg g">工</span></td><td class="bl">6</td><td class="bl"><span class="dd">--</span></td><td class="gr"><span class="bg g">工</span></td><td class="gr">6</td><td class="gr"><span class="dd">--</span></td><td class="gr"><span class="bg g">工</span></td><td class="gr">2</td><td class="gr"><span class="dd">--</span></td><td class="bl"><span class="bg g">工</span></td><td class="bl">2</td><td class="bl"><span class="dd">--</span></td><td class="gr"><span class="bg z">自</span></td><td class="gr">7</td><td class="gr"><span class="dd">--</span></td><td class="bl"><span class="bg g">工</span></td><td class="bl">2</td><td class="bl"><span class="dd">--</span></td><td class="gr"><span class="bg g">工</span></td><td class="gr">2</td><td class="gr"><span class="dd">--</span></td><td class="bl"><span class="bg g">工</span></td><td class="bl">2</td><td class="bl"><span class="dd">--</span></td></tr>
<tr class="a" style="height:40px"><td class="l fx">NG普货<span class="e3">...</span></td><td class="l fx">CNNG0<span class="e3">...</span></td><td class="l fx"><a>H<span class="d">2301033</span></a><span class="e3">...</span></td><td class="n">-</td><td class="n">AC公司</td><td class="n st">-</td><td class="n en">-</td><td class="bl"><span class="bg g">工</span></td><td class="bl">6</td><td class="bl"><span class="dd">--</span></td><td class="gr"><span class="bg g">工</span></td><td class="gr">6</td><td class="gr"><span class="dd">--</span></td><td class="gr"><span class="bg g">工</span></td><td class="gr">2</td><td class="gr"><span class="dd">--</span></td><td class="bl"><span class="bg g">工</span></td><td class="bl">2</td><td class="bl"><span class="dd">--</span></td><td class="gr"><span class="bg z">自</span></td><td class="gr">7</td><td class="gr"><span class="dd">--</span></td><td class="bl"><span class="bg g">工</span></td><td class="bl">2</td><td class="bl"><span class="dd">--</span></td><td class="gr"><span class="bg g">工</span></td><td class="gr">2</td><td class="gr"><span class="dd">--</span></td><td class="bl"><span class="bg g">工</span></td><td class="bl">2</td><td class="bl"><span class="dd">--</span></td></tr>
<tr class="b" style="height:62px"><td class="l fx">NG普货<span class="e3">...</span></td><td class="l fx">CNNG0<span class="e3">...</span></td><td class="l fx"><a>H<span class="d">2212210</span></a><span class="e3">...</span></td><td class="n l" style="padding-left:8.300px"><span class="d">20221561225</span><span class="e3">...</span></td><td class="n"><span class="lc">carter</span></td><td class="n st"><span class="d">2022-12-2<br>1</span></td><td class="n en">-</td><td class="bl"><span class="bg g">工</span></td><td class="bl">6</td><td class="bl"><span class="dd">--</span></td><td class="gr"><span class="bg g">工</span></td><td class="gr">6</td><td class="gr"><span class="dd">--</span></td><td class="gr"><span class="bg g">工</span></td><td class="gr">2</td><td class="gr"><span class="dd">--</span></td><td class="bl"><span class="bg g">工</span></td><td class="bl">2</td><td class="bl"><span class="dd">--</span></td><td class="gr"><span class="bg z">自</span></td><td class="gr">7</td><td class="gr"><span class="dd">--</span></td><td class="bl"><span class="bg g">工</span></td><td class="bl">2</td><td class="bl"><span class="dd">--</span></td><td class="gr"><span class="bg g">工</span></td><td class="gr">2</td><td class="gr"><span class="dd">--</span></td><td class="bl"><span class="bg g">工</span></td><td class="bl">2</td><td class="bl"><span class="dd">--</span></td></tr>
<tr class="a" style="height:40px"><td class="l fx">NG普货<span class="e3">...</span></td><td class="l fx">CNNG0<span class="e3">...</span></td><td class="l fx"><a>H<span class="d">2301035</span></a><span class="e3">...</span></td><td class="n">-</td><td class="n">AC公司</td><td class="n st">-</td><td class="n en">-</td><td class="bl"><span class="bg g">工</span></td><td class="bl">6</td><td class="bl"><span class="dd">--</span></td><td class="gr"><span class="bg g">工</span></td><td class="gr">6</td><td class="gr"><span class="dd">--</span></td><td class="gr"><span class="bg g">工</span></td><td class="gr">2</td><td class="gr"><span class="dd">--</span></td><td class="bl"><span class="bg g">工</span></td><td class="bl">2</td><td class="bl"><span class="dd">--</span></td><td class="gr"><span class="bg z">自</span></td><td class="gr">7</td><td class="gr"><span class="dd">--</span></td><td class="bl"><span class="bg g">工</span></td><td class="bl">2</td><td class="bl"><span class="dd">--</span></td><td class="gr"><span class="bg g">工</span></td><td class="gr">2</td><td class="gr"><span class="dd">--</span></td><td class="bl"><span class="bg g">工</span></td><td class="bl">2</td><td class="bl"><span class="dd">--</span></td></tr>
<tr class="b" style="height:62px"><td class="l fx">NG普货<span class="e3">...</span></td><td class="l fx">CNNG0<span class="e3">...</span></td><td class="l fx"><a>H<span class="d">2212216</span></a><span class="e3">...</span></td><td class="n l" style="padding-left:8.300px"><span class="d">20221561225</span><span class="e3">...</span></td><td class="n"><span class="lc">carter</span></td><td class="n st"><span class="d">2022-12-2<br>1</span></td><td class="n en">-</td><td class="bl"><span class="bg g">工</span></td><td class="bl">6</td><td class="bl"><span class="dd">--</span></td><td class="gr"><span class="bg g">工</span></td><td class="gr">6</td><td class="gr"><span class="dd">--</span></td><td class="gr"><span class="bg g">工</span></td><td class="gr">2</td><td class="gr"><span class="dd">--</span></td><td class="bl"><span class="bg g">工</span></td><td class="bl">2</td><td class="bl"><span class="dd">--</span></td><td class="gr"><span class="bg z">自</span></td><td class="gr">7</td><td class="gr"><span class="dd">--</span></td><td class="bl"><span class="bg g">工</span></td><td class="bl">2</td><td class="bl"><span class="dd">--</span></td><td class="gr"><span class="bg g">工</span></td><td class="gr">2</td><td class="gr"><span class="dd">--</span></td><td class="bl"><span class="bg g">工</span></td><td class="bl">2</td><td class="bl"><span class="dd">--</span></td></tr>
</tbody></table>
<div class="abs" style="left:0;top:606px;width:1871px;height:14px;background:#fafafa"></div>
<div class="abs" style="left:2px;top:610px;width:1689px;height:8px;border-radius:4px;background:#b9b9b9"></div>
<div class="abs" style="left:1856px;top:80px;width:14px;height:526px;background:#fafafa"></div>
<div class="abs" style="left:1858px;top:0;width:12px;height:80px;background:linear-gradient(90deg,rgba(0,0,0,0),rgba(0,0,0,.07))"></div>
<div class="abs" style="left:1859px;top:81px;width:8px;height:351px;border-radius:4px;background:#b5b5b5"></div>
</div>
<svg class="abs" style="left:1880px;top:576px" width="34" height="34" viewBox="1880 576 34 34"><path d="M1897.800 581.300L1888 592.500L1897.800 603.700M1907.800 581.300L1898 592.500L1907.800 603.700" stroke="rgba(90,90,90,.65)" stroke-width="2" fill="none"/></svg>
<!-- pagination -->
<div class="abs" style="left:1583px;top:1014px;line-height:24px;font-size:14px;white-space:nowrap"><span style="letter-spacing:.5px">第 1-14 条/总共 14 条</span></div>
<svg class="abs" style="left:1738px;top:1019px" width="10" height="12" viewBox="0 0 10 12"><path d="M8 1L2 6l6 5" stroke="#c4c4c4" stroke-width="1.200" fill="none"/></svg>
<div class="abs" style="left:1755px;top:1013px;width:24px;height:24px;border:1px solid #1786fb;border-radius:2px;color:#1786fb;text-align:center;line-height:23px;font-size:14px;-webkit-text-stroke:.3px #1786fb">1</div>
<svg class="abs" style="left:1786px;top:1019px" width="10" height="12" viewBox="0 0 10 12"><path d="M2 1l6 5-6 5" stroke="#c4c4c4" stroke-width="1.200" fill="none"/></svg>
<div class="abs" style="left:1805px;top:1013px;width:91px;height:24px;border:1px solid #d9d9d9;border-radius:2px;line-height:23.500px;font-size:14px;padding-left:8px;white-space:nowrap"><span style="letter-spacing:.35px">20 条/页</span></div>
<svg class="abs" style="left:1873px;top:1021px" width="12" height="8" viewBox="0 0 12 8"><path d="M1 1l5 5.500L11 1" stroke="#bfbfbf" stroke-width="1.100" fill="none"/></svg>
<!-- window corners / bottom edge -->
<div class="abs" style="left:0;top:1053px;width:1920px;height:2px;background:#eef0f4"></div>
<svg class="abs" style="left:0;top:1044px" width="11" height="11" viewBox="0 0 11 11"><path d="M0 0v11h11A11 11 0 0 1 0 0z" fill="#000"/></svg>
<svg class="abs" style="left:1910px;top:1045px" width="10" height="10" viewBox="0 0 10 10"><path d="M10 0v10H0A10 10 0 0 0 10 0z" fill="#1a0a20"/></svg>


<svg class="abs" style="left:0;top:0;pointer-events:none" width="1920" height="1055" viewBox="0 0 1920 1055">
<rect x="28.500" y="209.500" width="463.100" height="39.500" rx="4.500" fill="none" stroke="#fb251f" stroke-width="3"/>
<rect x="538.600" y="211" width="427.900" height="134.600" rx="4.500" fill="none" stroke="#fb251f" stroke-width="3"/>
<path d="M319 225.400 L634.300 244.300 L627.500 235.700 L652.300 253.500 L625.500 266.700 L632.300 257.800 L319 230.300 A2.500 2.500 0 0 1 319 225.400 Z" fill="#fb251f" stroke="#fb251f" stroke-width=".8" stroke-linejoin="round"/>
</svg>

</div>
</body>
</html>
